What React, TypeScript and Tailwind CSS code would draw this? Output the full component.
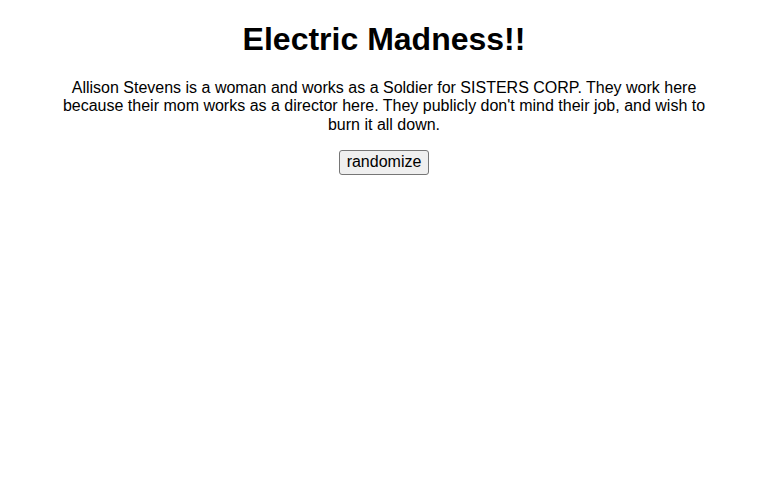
import { useState } from "react";

const App = () => {
  const [story] = useState(
    "Allison Stevens is a woman and works as a Soldier for SISTERS CORP. They work here because their mom works as a director here. They publicly don't mind their job, and wish to burn it all down."
  );

  return (
    <main className="min-h-screen bg-white text-black font-['Liberation_Sans',Arial,sans-serif] text-center">
      <h1 className="pt-[21px] text-[32px] font-bold leading-[37px]">Electric Madness!!</h1>
      <p className="mx-auto mt-[21px] max-w-[662px] text-[16px] leading-[18.4px]">{story}</p>
      <button className="mt-[16px] rounded-[3px] border border-[#767676] bg-[#efefef] px-[7px] py-[2px] text-[16px] leading-[18.4px]">
        randomize
      </button>
    </main>
  );
};

export default App;
